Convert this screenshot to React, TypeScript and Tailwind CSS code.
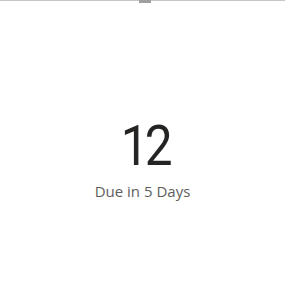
export default function App() {
  return (
    <div className="relative h-[291px] w-[285px] bg-white border-t border-[#c8c6c4]">
      <div className="absolute left-[139px] top-[-1px] h-[3px] w-[12px] bg-[#a19f9d]" />
      <div className="flex flex-col items-center pt-[118px]">
        <div className="scale-x-[0.9] pl-[0.08em] text-[55px] leading-none tracking-[-0.08em] text-[#252423] font-['Roboto',sans-serif]">
          12
        </div>
        <div className="mt-[7px] text-[15px] leading-5 text-[#605e5c] font-['Open_Sans',sans-serif]">
          Due in 5 Days
        </div>
      </div>
    </div>
  );
}
